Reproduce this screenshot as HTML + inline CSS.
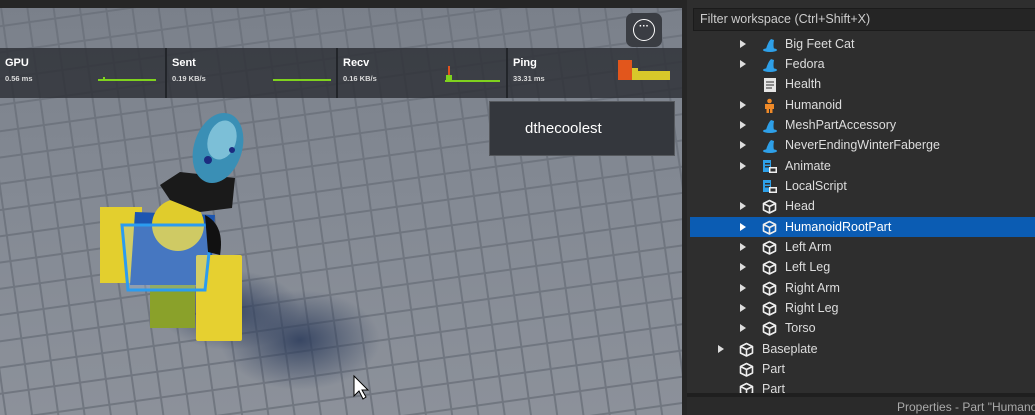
<!DOCTYPE html>
<html><head><meta charset="utf-8"><style>
*{margin:0;padding:0;box-sizing:border-box}
body{width:1035px;height:415px;overflow:hidden;background:#2e2e2e;font-family:"Liberation Sans",sans-serif;position:relative}
#vp{position:absolute;left:0;top:0;width:682px;height:415px;overflow:hidden}
.stats{position:absolute;left:0;top:48px;width:682px;height:50px;background:rgba(45,48,54,.82)}
.st{position:absolute;top:0;height:50px;border-right:2px solid #22252a;color:#fff}
.st b{position:absolute;left:5px;top:9px;font-size:11px}
.st i{position:absolute;left:5px;top:26px;font-size:7.5px;font-style:normal;font-weight:bold;color:#ddd}
.name{position:absolute;left:489px;top:101px;width:186px;height:55px;background:#34373d;border:1px solid #55585d;color:#fff;font-size:15px;line-height:53px;padding-left:35px}
.more{position:absolute;left:626px;top:13px;width:36px;height:34px;background:#3a3d43;border-radius:7px}
.more div{position:absolute;left:7px;top:6px;width:22px;height:22px;border:1.5px solid #fff;border-radius:50%;color:#fff;font-size:10px;text-align:center;line-height:14px;font-weight:bold}
#pn{position:absolute;left:682px;top:0;width:353px;height:415px;background:#2e2e2e;border-left:5px solid #262626}
.flt{position:absolute;left:6px;top:8px;width:347px;height:23px;background:#252525;border:1px solid #1b1b1b;color:#ccc;font-size:12.5px;line-height:21px;padding-left:6px}
.row{position:absolute;left:3px;width:350px;height:20.4px;color:#ddd;font-size:12.5px;line-height:20px}
.row.sel{background:#0b5cb3;color:#fff}
.ar{position:absolute;top:6px;width:0;height:0;border-left:6px solid #ddd;border-top:4px solid transparent;border-bottom:4px solid transparent}
.ic{position:absolute;top:3px;width:15px;height:15px}
.tx{position:absolute;top:0}
.bot{position:absolute;left:0;top:393px;width:353px;height:22px;background:#2a2a2a;border-top:4px solid #1f1f1f;color:#aaa;font-size:12px;padding-left:210px;line-height:20px;white-space:nowrap;overflow:hidden}
</style></head><body>
<div id="vp">
<svg width="682" height="415" style="position:absolute;left:0;top:0">
<defs>
<linearGradient id="g" x1="0" y1="0" x2="0" y2="1"><stop offset="0" stop-color="#7a808a"/><stop offset=".5" stop-color="#848a94"/><stop offset="1" stop-color="#8c919a"/></linearGradient>
<pattern id="p" width="26" height="26" patternUnits="userSpaceOnUse" patternTransform="rotate(-8)"><rect width="26" height="26" fill="none" stroke="#6a707a" stroke-width="2"/></pattern>
<radialGradient id="sh"><stop offset="0" stop-color="#2a3a5a" stop-opacity=".85"/><stop offset="1" stop-color="#2a3a5a" stop-opacity="0"/></radialGradient>
</defs>
<rect width="682" height="415" fill="url(#g)"/>
<rect width="682" height="415" fill="url(#p)" opacity=".8"/>
<rect width="682" height="8" fill="#262626"/>
<ellipse cx="300" cy="340" rx="80" ry="50" fill="url(#sh)"/>
<ellipse cx="230" cy="310" rx="70" ry="40" fill="url(#sh)"/>
<rect x="100" y="207" width="42" height="76" fill="#e3cf2e"/>
<rect x="150" y="280" width="45" height="48" fill="#8aa12a"/>
<polygon points="135,212 215,215 210,285 130,285" fill="#1c55b0"/>
<ellipse cx="178" cy="225" rx="26" ry="26" fill="#e0cc2c"/>
<rect x="196" y="255" width="46" height="86" fill="#e6d030" rx="2"/>
<polygon points="122,225 212,225 205,290 128,290" fill="#a8c8e8" fill-opacity=".3" stroke="#2b9cf0" stroke-width="3"/>
<path d="M160 185 L180 172 L235 178 L232 208 L200 212 L170 200Z" fill="#1a1a1a"/>
<path d="M205 215 Q225 225 220 255 L208 252Z" fill="#111"/>
<ellipse cx="218" cy="148" rx="24" ry="36" fill="#3a8fb5" transform="rotate(18 218 148)"/>
<ellipse cx="222" cy="140" rx="14" ry="20" fill="#a8e0ef" opacity=".6" transform="rotate(18 222 140)"/>
<circle cx="208" cy="160" r="4" fill="#1c2c80"/><circle cx="232" cy="150" r="3" fill="#1c2c80"/>
<path d="M354 376 L354 396 L359 391 L363 399 L366 397 L362 390 L368 390Z" fill="#fff" stroke="#000" stroke-width="1"/>
</svg>
<div class="more"><div>···</div></div>
<div class="stats">
<div class="st" style="left:0;width:167px"><b>GPU</b><i>0.56 ms</i>
<svg style="position:absolute;left:98px;top:26px" width="58" height="8"><path d="M0 6 H58" stroke="#7fd21e" stroke-width="2"/><rect x="5" y="3" width="2" height="3" fill="#7fd21e"/></svg></div>
<div class="st" style="left:167px;width:171px"><b>Sent</b><i>0.19 KB/s</i>
<svg style="position:absolute;left:106px;top:26px" width="58" height="8"><path d="M0 6 H58" stroke="#7fd21e" stroke-width="2"/></svg></div>
<div class="st" style="left:338px;width:170px"><b>Recv</b><i>0.16 KB/s</i>
<svg style="position:absolute;left:107px;top:16px" width="55" height="18"><path d="M0 17 H55" stroke="#7fd21e" stroke-width="2"/><rect x="3" y="2" width="2" height="15" fill="#e0521e"/><rect x="1" y="11" width="6" height="6" fill="#7fd21e"/></svg></div>
<div class="st" style="left:508px;width:174px;border:none"><b>Ping</b><i>33.31 ms</i>
<svg style="position:absolute;left:110px;top:12px" width="52" height="20"><rect x="0" y="0" width="14" height="20" fill="#e2561c"/><rect x="14" y="8" width="6" height="12" fill="#d8c82a"/><rect x="20" y="11" width="32" height="9" fill="#d8c82a"/></svg></div>
</div>
<div class="name">dthecoolest</div>
</div>
<div id="pn">
<div class="flt">Filter workspace (Ctrl+Shift+X)</div>
<svg width="0" height="0" style="position:absolute"><defs>
<g id="hat"><path d="M4 12 Q6 5 9 2 L12 3 Q11 8 12 12 Z" fill="#2ea0e8"/><ellipse cx="8" cy="13" rx="7" ry="2" fill="#2ea0e8"/></g>
<g id="cube"><path d="M7.5 1.5 L13.5 4.5 V11 L7.5 14 L1.5 11 V4.5 Z M1.5 4.5 L7.5 7.5 L13.5 4.5 M7.5 7.5 V14" fill="none" stroke="#eee" stroke-width="1.6" stroke-linejoin="round"/></g>
<g id="scr"><rect x="1" y="1" width="8" height="12" fill="#2ea0e8"/><rect x="3" y="4" width="5" height="1.5" fill="#2e2e2e"/><rect x="3" y="7" width="5" height="1.5" fill="#2e2e2e"/><rect x="7" y="8" width="8" height="6" fill="#eee"/><rect x="8.5" y="9.5" width="5" height="3" fill="#2e2e2e"/></g>
</defs></svg>
<div class="row" style="top:34px"><span class="ar" style="left:50px"></span><svg class="ic" style="left:72px"><use href="#hat"/></svg><span class="tx" style="left:95px">Big Feet Cat</span></div>
<div class="row" style="top:54px"><span class="ar" style="left:50px"></span><svg class="ic" style="left:72px"><use href="#hat"/></svg><span class="tx" style="left:95px">Fedora</span></div>
<div class="row" style="top:74px"><svg class="ic" style="left:72px"><rect x="2" y="1" width="12" height="14" fill="#e6e6e6"/><path d="M4 5h8M4 8h8M4 11h6" stroke="#555" stroke-width="1.3"/></svg><span class="tx" style="left:95px">Health</span></div>
<div class="row" style="top:95px"><span class="ar" style="left:50px"></span><svg class="ic" style="left:72px"><circle cx="7.5" cy="3" r="2.3" fill="#f08a28"/><rect x="3" y="6" width="9" height="5" fill="#f08a28"/><rect x="4.5" y="11" width="2.5" height="4" fill="#f08a28"/><rect x="8" y="11" width="2.5" height="4" fill="#f08a28"/></svg><span class="tx" style="left:95px">Humanoid</span></div>
<div class="row" style="top:115px"><span class="ar" style="left:50px"></span><svg class="ic" style="left:72px"><use href="#hat"/></svg><span class="tx" style="left:95px">MeshPartAccessory</span></div>
<div class="row" style="top:135px"><span class="ar" style="left:50px"></span><svg class="ic" style="left:72px"><use href="#hat"/></svg><span class="tx" style="left:95px">NeverEndingWinterFaberge</span></div>
<div class="row" style="top:156px"><span class="ar" style="left:50px"></span><svg class="ic" style="left:72px"><use href="#scr"/></svg><span class="tx" style="left:95px">Animate</span></div>
<div class="row" style="top:176px"><svg class="ic" style="left:72px"><use href="#scr"/></svg><span class="tx" style="left:95px">LocalScript</span></div>
<div class="row" style="top:196px"><span class="ar" style="left:50px"></span><svg class="ic" style="left:72px"><use href="#cube"/></svg><span class="tx" style="left:95px">Head</span></div>
<div class="row sel" style="top:217px"><span class="ar" style="left:50px;border-left-color:#fff"></span><svg class="ic" style="left:72px"><use href="#cube"/></svg><span class="tx" style="left:95px">HumanoidRootPart</span></div>
<div class="row" style="top:237px"><span class="ar" style="left:50px"></span><svg class="ic" style="left:72px"><use href="#cube"/></svg><span class="tx" style="left:95px">Left Arm</span></div>
<div class="row" style="top:257px"><span class="ar" style="left:50px"></span><svg class="ic" style="left:72px"><use href="#cube"/></svg><span class="tx" style="left:95px">Left Leg</span></div>
<div class="row" style="top:278px"><span class="ar" style="left:50px"></span><svg class="ic" style="left:72px"><use href="#cube"/></svg><span class="tx" style="left:95px">Right Arm</span></div>
<div class="row" style="top:298px"><span class="ar" style="left:50px"></span><svg class="ic" style="left:72px"><use href="#cube"/></svg><span class="tx" style="left:95px">Right Leg</span></div>
<div class="row" style="top:318px"><span class="ar" style="left:50px"></span><svg class="ic" style="left:72px"><use href="#cube"/></svg><span class="tx" style="left:95px">Torso</span></div>
<div class="row" style="top:339px"><span class="ar" style="left:28px"></span><svg class="ic" style="left:49px"><use href="#cube"/></svg><span class="tx" style="left:72px">Baseplate</span></div>
<div class="row" style="top:359px"><svg class="ic" style="left:49px"><use href="#cube"/></svg><span class="tx" style="left:72px">Part</span></div>
<div class="row" style="top:379px"><svg class="ic" style="left:49px"><use href="#cube"/></svg><span class="tx" style="left:72px">Part</span></div>
<div class="bot">Properties - Part "HumanoidRootPart"</div>
</div>
</body></html>
